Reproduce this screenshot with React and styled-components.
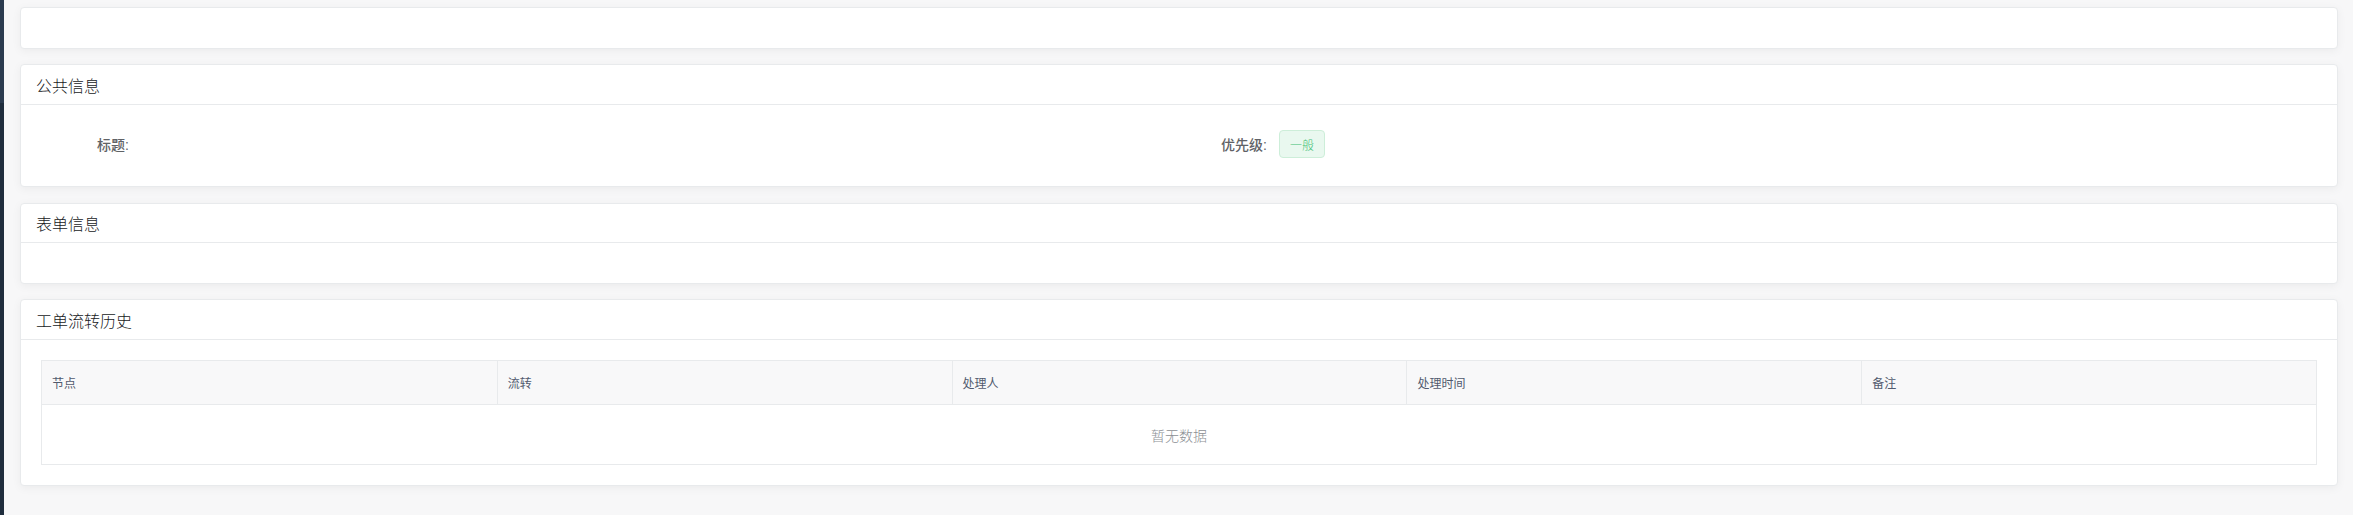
import React from 'react';
import styled, { createGlobalStyle } from 'styled-components';

const GlobalStyle = createGlobalStyle`
  html, body {
    margin: 0;
    padding: 0;
    background: #f7f7f8;
    font-family: "Liberation Sans", "Noto Sans CJK SC", sans-serif;
  }
  * { box-sizing: border-box; }
`;

const Layout = styled.div`
  display: flex;
  min-height: 515px;
`;

const Sidebar = styled.aside`
  width: 4px;
  flex-shrink: 0;
  display: flex;
  flex-direction: column;
  background: #1f2d3d;
`;

const SidebarTop = styled.div`
  height: 103px;
  background: #2b3b4f;
`;

const Main = styled.main`
  flex: 1;
  padding: 7px 15px 16px 16px;
  display: flex;
  flex-direction: column;
  gap: 15px;
`;

const Card = styled.section`
  background: #fff;
  border: 1px solid #e8eaec;
  border-radius: 4px;
  box-shadow: 0 2px 10px rgba(0, 0, 0, 0.05);
  margin-top: ${({ $shift }) => $shift || 0}px;
`;

const CardHeader = styled.div`
  height: ${({ $h }) => $h || 40}px;
  padding: 0 15px;
  display: flex;
  align-items: center;
  border-bottom: 1px solid #e8eaec;
  font-size: 16px;
  font-weight: 300;
  color: #17191c;
`;

const CardBody = styled.div`
  padding: ${({ $pad }) => $pad || '20px'};
  min-height: 40px;
`;

const FormRow = styled.div`
  display: grid;
  grid-template-columns: 1fr 1fr;
`;

const FormItem = styled.div`
  display: flex;
  align-items: center;
  height: 38px;
`;

const Label = styled.label`
  width: 100px;
  padding-right: 12px;
  text-align: right;
  font-size: 14px;
  font-weight: 500;
  color: #606266;
`;

const Tag = styled.span`
  display: inline-flex;
  align-items: center;
  height: 28px;
  padding: 0 10px;
  font-size: 12px;
  font-weight: 300;
  color: #3fbf73;
  background: #e9f8ef;
  border: 1px solid #cdeed9;
  border-radius: 4px;
`;

const Table = styled.div`
  border: 1px solid #e8eaec;
`;

const HeadRow = styled.div`
  display: grid;
  grid-template-columns: repeat(5, 1fr);
  background: #f8f8f9;
  border-bottom: 1px solid #e8eaec;
`;

const HeadCell = styled.div`
  height: 43px;
  display: flex;
  align-items: center;
  padding: 0 10px;
  font-size: 12px;
  color: #515a6e;
  border-left: ${({ $first }) => ($first ? 'none' : '1px solid #e8eaec')};
`;

const Empty = styled.div`
  height: 59px;
  display: flex;
  align-items: center;
  justify-content: center;
  font-size: 14px;
  font-weight: 300;
  color: #8c8f94;
`;

const columns = ['节点', '流转', '处理人', '处理时间', '备注'];

export default function App() {
  return (
    <>
      <GlobalStyle />
      <Layout>
        <Sidebar>
          <SidebarTop />
        </Sidebar>
        <Main>
          <Card>
            <CardBody />
          </Card>

          <Card>
            <CardHeader $h={40}>公共信息</CardHeader>
            <CardBody $pad="20px 20px 23px">
              <FormRow>
                <FormItem>
                  <Label>标题:</Label>
                </FormItem>
                <FormItem>
                  <Label>优先级:</Label>
                  <Tag>一般</Tag>
                </FormItem>
              </FormRow>
            </CardBody>
          </Card>

          <Card $shift={1}>
            <CardHeader $h={39}>表单信息</CardHeader>
            <CardBody />
          </Card>

          <Card>
            <CardHeader $h={40}>工单流转历史</CardHeader>
            <CardBody>
              <Table>
                <HeadRow>
                  {columns.map((c, i) => (
                    <HeadCell key={c} $first={i === 0}>{c}</HeadCell>
                  ))}
                </HeadRow>
                <Empty>暂无数据</Empty>
              </Table>
            </CardBody>
          </Card>
        </Main>
      </Layout>
    </>
  );
}
